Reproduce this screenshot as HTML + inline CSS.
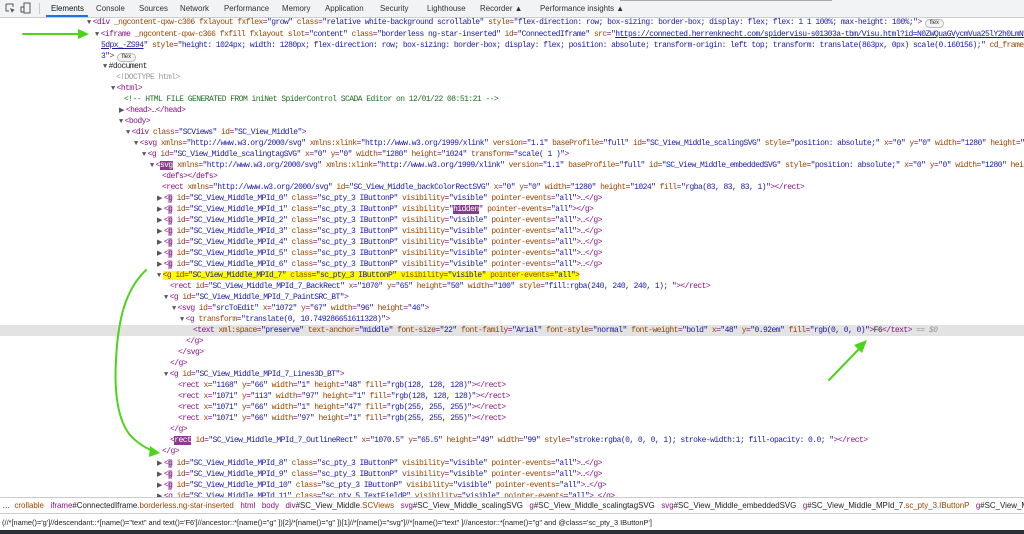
<!DOCTYPE html>
<html><head><meta charset="utf-8">
<style>
html,body{margin:0;padding:0;width:1024px;height:534px;overflow:hidden;background:#fff;position:relative}
.tabs{position:absolute;left:0;top:0;width:1024px;height:17px;background:#f1f3f4;border-bottom:1px solid #cbcdd1;font:7.9px "Liberation Sans",sans-serif;color:#333}
.tab{position:absolute;top:4px}
.l{position:absolute;white-space:nowrap;font-family:"Liberation Mono",monospace;font-size:8px;letter-spacing:-0.55px;line-height:11px;height:11px;color:#881280}
.a{color:#994500}.v{color:#1a1aa6}.c{color:#236e25}.g{color:#999}.k{color:#222}
.u{text-decoration:underline}
.ar{color:#555;font-size:7px;margin-right:2px}
.badge{display:inline-block;font:6px "Liberation Sans",sans-serif;color:#333;border:1px solid #bbb;border-radius:6px;padding:0 4px;line-height:7px;margin-left:3px;background:#f3f3f3;letter-spacing:0}
.hl{background:#ffff00}
.m{background:#8a3a8a;color:#fff}
.mg{background:#c9a6d2}
.sel{position:absolute;left:0;top:325px;width:1024px;height:11px;background:#e3e3e3}
.crumbs{position:absolute;left:0;top:497px;width:1024px;height:15px;background:#fff;border-top:1px solid #ccc;font:7.9px "Liberation Sans",sans-serif;white-space:nowrap;line-height:15px;color:#881280}
.crumbs b{font-weight:normal;color:#222}
.search{position:absolute;left:0;top:513px;width:1024px;height:17px;border-top:1px solid #ccc;font:7.4px "Liberation Sans",sans-serif;white-space:nowrap;line-height:17px;color:#222}
.dark{position:absolute;left:0;top:530px;width:1024px;height:4px;background:#2b2f36}
</style></head><body>
<div class="tabs">
<svg style="position:absolute;left:5px;top:3px" width="11" height="11" viewBox="0 0 11 11"><path d="M1 1h7v3M1 1v7h3" fill="none" stroke="#555" stroke-width="1"/><path d="M5 5l5 2-2 1-1 2z" fill="#555"/></svg>
<svg style="position:absolute;left:20px;top:2px" width="12" height="12" viewBox="0 0 12 12"><rect x="4" y="1" width="6" height="10" fill="none" stroke="#555"/><rect x="1" y="5" width="3" height="5" fill="none" stroke="#555"/></svg>
<div style="position:absolute;left:39px;top:3px;width:1px;height:11px;background:#ccc"></div>
<span class="tab" style="left:51px;color:#111">Elements</span>
<div style="position:absolute;left:46px;top:15px;width:42px;height:2px;background:#1a73e8"></div>
<span class="tab" style="left:96px">Console</span>
<span class="tab" style="left:139px">Sources</span>
<span class="tab" style="left:180px">Network</span>
<span class="tab" style="left:224px">Performance</span>
<span class="tab" style="left:282px">Memory</span>
<span class="tab" style="left:325px">Application</span>
<span class="tab" style="left:380px">Security</span>
<span class="tab" style="left:427px">Lighthouse</span>
<span class="tab" style="left:480px">Recorder &#9650;</span>
<span class="tab" style="left:540px">Performance insights &#9650;</span>
<div style="position:absolute;left:620px;top:0;width:212px;height:1px;background:#aaa"></div>
</div>

<div class="sel"></div>

<div class="l" style="left:87px;top:17px"><span class="ar">▼</span>&lt;div <span class="a">_ngcontent-qxw-c306 fxlayout fxflex</span>=<span class="v">"grow"</span> <span class="a">class</span>=<span class="v">"relative white-background scrollable"</span> <span class="a">style</span>=<span class="v">"flex-direction: row; box-sizing: border-box; display: flex; flex: 1 1 100%; max-height: 100%;"</span>&gt;<span class="badge">flex</span></div>
<div class="l" style="left:95px;top:29px"><span class="ar">▼</span>&lt;iframe <span class="a">_ngcontent-qxw-c366 fxfill fxlayout slot</span>=<span class="v">"content"</span> <span class="a">class</span>=<span class="v">"borderless ng-star-inserted"</span> <span class="a">id</span>=<span class="v">"ConnectedIframe"</span> <span class="a">src</span>=<span class="v">"<span class="u">https://connected.herrenknecht.com/spidervisu-s01303a-tbm/Visu.html?id=N0ZWQuaGVycmVua25lY2h0LmNvbS</span></span></div>
<div class="l" style="left:101px;top:40px"><span class="v u">5dpx_-ZS94</span><span class="v">"</span> <span class="a">style</span>=<span class="v">"height: 1024px; width: 1280px; flex-direction: row; box-sizing: border-box; display: flex; position: absolute; transform-origin: left top; transform: translate(863px, 0px) scale(0.160156);"</span> <span class="a">cd_frame_id_</span>=<span class="v">"</span></div>
<div class="l" style="left:101px;top:51px"><span class="v">3"</span>&gt;<span class="badge">flex</span></div>
<div class="l k" style="left:103px;top:61px"><span class="ar">▼</span>#document</div>
<div class="l g" style="left:116px;top:72px">&lt;!DOCTYPE html&gt;</div>
<div class="l" style="left:111px;top:83px"><span class="ar">▼</span>&lt;html&gt;</div>
<div class="l c" style="left:124px;top:94px">&lt;!-- HTML FILE GENERATED FROM iniNet  SpiderControl SCADA Editor on  12/01/22 08:51:21 --&gt;</div>
<div class="l" style="left:119px;top:105px"><span class="ar">▶</span>&lt;head&gt;<span class="k">…</span>&lt;/head&gt;</div>
<div class="l" style="left:119px;top:116px"><span class="ar">▼</span>&lt;body&gt;</div>
<div class="l" style="left:126px;top:127px"><span class="ar">▼</span>&lt;div <span class="a">class</span>=<span class="v">"SCViews"</span> <span class="a">id</span>=<span class="v">"SC_View_Middle"</span>&gt;</div>
<div class="l" style="left:134px;top:138px"><span class="ar">▼</span>&lt;svg <span class="a">xmlns</span>=<span class="v">"http://www.w3.org/2000/svg"</span> <span class="a">xmlns:xlink</span>=<span class="v">"http://www.w3.org/1999/xlink"</span> <span class="a">version</span>=<span class="v">"1.1"</span> <span class="a">baseProfile</span>=<span class="v">"full"</span> <span class="a">id</span>=<span class="v">"SC_View_Middle_scalingSVG"</span> <span class="a">style</span>=<span class="v">"position: absolute;"</span> <span class="a">x</span>=<span class="v">"0"</span> <span class="a">y</span>=<span class="v">"0"</span> <span class="a">width</span>=<span class="v">"1280"</span> <span class="a">height</span>=<span class="v">"1024"</span></div>
<div class="l" style="left:142px;top:149px"><span class="ar">▼</span>&lt;g <span class="a">id</span>=<span class="v">"SC_View_Middle_scalingtagSVG"</span> <span class="a">x</span>=<span class="v">"0"</span> <span class="a">y</span>=<span class="v">"0"</span> <span class="a">width</span>=<span class="v">"1280"</span> <span class="a">height</span>=<span class="v">"1024"</span> <span class="a">transform</span>=<span class="v">"scale( 1 )"</span>&gt;</div>
<div class="l" style="left:150px;top:160px"><span class="ar">▼</span>&lt;<span class="m">svg</span> <span class="a">xmlns</span>=<span class="v">"http://www.w3.org/2000/svg"</span> <span class="a">xmlns:xlink</span>=<span class="v">"http://www.w3.org/1999/xlink"</span> <span class="a">version</span>=<span class="v">"1.1"</span> <span class="a">baseProfile</span>=<span class="v">"full"</span> <span class="a">id</span>=<span class="v">"SC_View_Middle_embeddedSVG"</span> <span class="a">style</span>=<span class="v">"position: absolute;"</span> <span class="a">x</span>=<span class="v">"0"</span> <span class="a">y</span>=<span class="v">"0"</span> <span class="a">width</span>=<span class="v">"1280"</span> <span class="a">heig</span></div>
<div class="l" style="left:162px;top:171px">&lt;defs&gt;&lt;/defs&gt;</div>
<div class="l" style="left:162px;top:182px">&lt;rect <span class="a">xmlns</span>=<span class="v">"http://www.w3.org/2000/svg"</span> <span class="a">id</span>=<span class="v">"SC_View_Middle_backColorRectSVG"</span> <span class="a">x</span>=<span class="v">"0"</span> <span class="a">y</span>=<span class="v">"0"</span> <span class="a">width</span>=<span class="v">"1280"</span> <span class="a">height</span>=<span class="v">"1024"</span> <span class="a">fill</span>=<span class="v">"rgba(83, 83, 83, 1)"</span>&gt;&lt;/rect&gt;</div>

<div class="l" style="left:157px;top:193px"><span class="ar">▶</span>&lt;<span class="mg">g</span> <span class="a">id</span>=<span class="v">"SC_View_Middle_MPId_0"</span> <span class="a">class</span>=<span class="v">"sc_pty_3 IButtonP"</span> <span class="a">visibility</span>=<span class="v">"visible"</span> <span class="a">pointer-events</span>=<span class="v">"all"</span>&gt;<span class="k">…</span>&lt;/g&gt;</div>
<div class="l" style="left:157px;top:204px"><span class="ar">▶</span>&lt;<span class="mg">g</span> <span class="a">id</span>=<span class="v">"SC_View_Middle_MPId_1"</span> <span class="a">class</span>=<span class="v">"sc_pty_3 IButtonP"</span> <span class="a">visibility</span>=<span class="v">"<span class="m">hidden</span>"</span> <span class="a">pointer-events</span>=<span class="v">"all"</span>&gt;&lt;/g&gt;</div>
<div class="l" style="left:157px;top:215px"><span class="ar">▶</span>&lt;<span class="mg">g</span> <span class="a">id</span>=<span class="v">"SC_View_Middle_MPId_2"</span> <span class="a">class</span>=<span class="v">"sc_pty_3 IButtonP"</span> <span class="a">visibility</span>=<span class="v">"visible"</span> <span class="a">pointer-events</span>=<span class="v">"all"</span>&gt;<span class="k">…</span>&lt;/g&gt;</div>
<div class="l" style="left:157px;top:226px"><span class="ar">▶</span>&lt;<span class="mg">g</span> <span class="a">id</span>=<span class="v">"SC_View_Middle_MPId_3"</span> <span class="a">class</span>=<span class="v">"sc_pty_3 IButtonP"</span> <span class="a">visibility</span>=<span class="v">"visible"</span> <span class="a">pointer-events</span>=<span class="v">"all"</span>&gt;<span class="k">…</span>&lt;/g&gt;</div>
<div class="l" style="left:157px;top:237px"><span class="ar">▶</span>&lt;<span class="mg">g</span> <span class="a">id</span>=<span class="v">"SC_View_Middle_MPId_4"</span> <span class="a">class</span>=<span class="v">"sc_pty_3 IButtonP"</span> <span class="a">visibility</span>=<span class="v">"visible"</span> <span class="a">pointer-events</span>=<span class="v">"all"</span>&gt;<span class="k">…</span>&lt;/g&gt;</div>
<div class="l" style="left:157px;top:248px"><span class="ar">▶</span>&lt;<span class="mg">g</span> <span class="a">id</span>=<span class="v">"SC_View_Middle_MPId_5"</span> <span class="a">class</span>=<span class="v">"sc_pty_3 IButtonP"</span> <span class="a">visibility</span>=<span class="v">"visible"</span> <span class="a">pointer-events</span>=<span class="v">"all"</span>&gt;<span class="k">…</span>&lt;/g&gt;</div>
<div class="l" style="left:157px;top:259px"><span class="ar">▶</span>&lt;<span class="mg">g</span> <span class="a">id</span>=<span class="v">"SC_View_Middle_MPId_6"</span> <span class="a">class</span>=<span class="v">"sc_pty_3 IButtonP"</span> <span class="a">visibility</span>=<span class="v">"visible"</span> <span class="a">pointer-events</span>=<span class="v">"all"</span>&gt;<span class="k">…</span>&lt;/g&gt;</div>
<div class="l" style="left:157px;top:270px"><span class="ar">▼</span><span class="hl">&lt;g <span class="a">id</span>=<span class="v">"SC_View_Middle_MPId_7"</span> <span class="a">class</span>=<span class="v">"sc_pty_3 IButtonP"</span> <span class="a">visibility</span>=<span class="v">"visible"</span> <span class="a">pointer-events</span>=<span class="v">"all"</span>&gt;</span></div>
<div class="l" style="left:170px;top:281px">&lt;rect <span class="a">id</span>=<span class="v">"SC_View_Middle_MPId_7_BackRect"</span> <span class="a">x</span>=<span class="v">"1070"</span> <span class="a">y</span>=<span class="v">"65"</span> <span class="a">height</span>=<span class="v">"50"</span> <span class="a">width</span>=<span class="v">"100"</span> <span class="a">style</span>=<span class="v">"fill:rgba(240, 240, 240, 1); "</span>&gt;&lt;/rect&gt;</div>
<div class="l" style="left:164px;top:292px"><span class="ar">▼</span>&lt;g <span class="a">id</span>=<span class="v">"SC_View_Middle_MPId_7_PaintSRC_BT"</span>&gt;</div>
<div class="l" style="left:172px;top:303px"><span class="ar">▼</span>&lt;svg <span class="a">id</span>=<span class="v">"srcToEdit"</span> <span class="a">x</span>=<span class="v">"1072"</span> <span class="a">y</span>=<span class="v">"67"</span> <span class="a">width</span>=<span class="v">"96"</span> <span class="a">height</span>=<span class="v">"46"</span>&gt;</div>
<div class="l" style="left:180px;top:314px"><span class="ar">▼</span>&lt;g <span class="a">transform</span>=<span class="v">"translate(0, 10.749286651611328)"</span>&gt;</div>
<div class="l" style="left:193px;top:325px">&lt;text <span class="a">xml:space</span>=<span class="v">"preserve"</span> <span class="a">text-anchor</span>=<span class="v">"middle"</span> <span class="a">font-size</span>=<span class="v">"22"</span> <span class="a">font-family</span>=<span class="v">"Arial"</span> <span class="a">font-style</span>=<span class="v">"normal"</span> <span class="a">font-weight</span>=<span class="v">"bold"</span> <span class="a">x</span>=<span class="v">"48"</span> <span class="a">y</span>=<span class="v">"0.92em"</span> <span class="a">fill</span>=<span class="v">"rgb(0, 0, 0)"</span>&gt;<span class="k">F6</span>&lt;/text&gt; <span class="g">== <i>$0</i></span></div>
<div class="l" style="left:186px;top:336px">&lt;/g&gt;</div>
<div class="l" style="left:178px;top:347px">&lt;/svg&gt;</div>
<div class="l" style="left:170px;top:358px">&lt;/g&gt;</div>
<div class="l" style="left:164px;top:369px"><span class="ar">▼</span>&lt;g <span class="a">id</span>=<span class="v">"SC_View_Middle_MPId_7_Lines3D_BT"</span>&gt;</div>
<div class="l" style="left:178px;top:380px">&lt;rect <span class="a">x</span>=<span class="v">"1168"</span> <span class="a">y</span>=<span class="v">"66"</span> <span class="a">width</span>=<span class="v">"1"</span> <span class="a">height</span>=<span class="v">"48"</span> <span class="a">fill</span>=<span class="v">"rgb(128, 128, 128)"</span>&gt;&lt;/rect&gt;</div>
<div class="l" style="left:178px;top:391px">&lt;rect <span class="a">x</span>=<span class="v">"1071"</span> <span class="a">y</span>=<span class="v">"113"</span> <span class="a">width</span>=<span class="v">"97"</span> <span class="a">height</span>=<span class="v">"1"</span> <span class="a">fill</span>=<span class="v">"rgb(128, 128, 128)"</span>&gt;&lt;/rect&gt;</div>
<div class="l" style="left:178px;top:402px">&lt;rect <span class="a">x</span>=<span class="v">"1071"</span> <span class="a">y</span>=<span class="v">"66"</span> <span class="a">width</span>=<span class="v">"1"</span> <span class="a">height</span>=<span class="v">"47"</span> <span class="a">fill</span>=<span class="v">"rgb(255, 255, 255)"</span>&gt;&lt;/rect&gt;</div>
<div class="l" style="left:178px;top:413px">&lt;rect <span class="a">x</span>=<span class="v">"1071"</span> <span class="a">y</span>=<span class="v">"66"</span> <span class="a">width</span>=<span class="v">"97"</span> <span class="a">height</span>=<span class="v">"1"</span> <span class="a">fill</span>=<span class="v">"rgb(255, 255, 255)"</span>&gt;&lt;/rect&gt;</div>
<div class="l" style="left:170px;top:424px">&lt;/g&gt;</div>
<div class="l" style="left:170px;top:435px">&lt;<span class="m">rect</span> <span class="a">id</span>=<span class="v">"SC_View_Middle_MPId_7_OutlineRect"</span> <span class="a">x</span>=<span class="v">"1070.5"</span> <span class="a">y</span>=<span class="v">"65.5"</span> <span class="a">height</span>=<span class="v">"49"</span> <span class="a">width</span>=<span class="v">"99"</span> <span class="a">style</span>=<span class="v">"stroke:rgba(0, 0, 0, 1); stroke-width:1;  fill-opacity: 0.0; "</span>&gt;&lt;/rect&gt;</div>
<div class="l" style="left:162px;top:446px">&lt;/g&gt;</div>
<div class="l" style="left:157px;top:458px"><span class="ar">▶</span>&lt;<span class="mg">g</span> <span class="a">id</span>=<span class="v">"SC_View_Middle_MPId_8"</span> <span class="a">class</span>=<span class="v">"sc_pty_3 IButtonP"</span> <span class="a">visibility</span>=<span class="v">"visible"</span> <span class="a">pointer-events</span>=<span class="v">"all"</span>&gt;<span class="k">…</span>&lt;/g&gt;</div>
<div class="l" style="left:157px;top:469px"><span class="ar">▶</span>&lt;<span class="mg">g</span> <span class="a">id</span>=<span class="v">"SC_View_Middle_MPId_9"</span> <span class="a">class</span>=<span class="v">"sc_pty_3 IButtonP"</span> <span class="a">visibility</span>=<span class="v">"visible"</span> <span class="a">pointer-events</span>=<span class="v">"all"</span>&gt;<span class="k">…</span>&lt;/g&gt;</div>
<div class="l" style="left:157px;top:480px"><span class="ar">▶</span>&lt;<span class="mg">g</span> <span class="a">id</span>=<span class="v">"SC_View_Middle_MPId_10"</span> <span class="a">class</span>=<span class="v">"sc_pty_3 IButtonP"</span> <span class="a">visibility</span>=<span class="v">"visible"</span> <span class="a">pointer-events</span>=<span class="v">"all"</span>&gt;<span class="k">…</span>&lt;/g&gt;</div>
<div class="l" style="left:157px;top:491px"><span class="ar">▶</span>&lt;g <span class="a">id</span>=<span class="v">"SC_View_Middle_MPId_11"</span> <span class="a">class</span>=<span class="v">"sc_pty_5 TextFieldP"</span> <span class="a">visibility</span>=<span class="v">"visible"</span> <span class="a">pointer-events</span>=<span class="v">"all"</span>&gt;<span class="k">…</span>&lt;/g&gt;</div>

<svg style="position:absolute;left:0;top:0" width="1024" height="534">
<g stroke="#4cd31a" stroke-width="2" fill="none" stroke-linecap="round">
<path d="M23 34 L80 34"/>
<path d="M146 270 C125 290 118 320 116 360 C114 395 118 420 130 435 C140 446 150 450 156 452"/>
<path d="M829 380 L860 348"/>
</g>
<g fill="#4cd31a">
<path d="M78 29 L89 34 L78 39 Z"/>
<path d="M150 446 L160 453 L149 457 Z"/>
<path d="M854 345 L867 340 L862 353 Z"/>
</g>
</svg>

<div class="crumbs">&nbsp;<b>…</b>&nbsp; <span style="color:#994500">crollable</span> &nbsp; <span>iframe</span><b>#ConnectedIframe</b><span style="color:#994500">.borderless.ng-star-inserted</span> &nbsp; html &nbsp; body &nbsp; div<b>#SC_View_Middle</b><span style="color:#994500">.SCViews</span> &nbsp; svg<b>#SC_View_Middle_scalingSVG</b> &nbsp; g<b>#SC_View_Middle_scalingtagSVG</b> &nbsp; svg<b>#SC_View_Middle_embeddedSVG</b> &nbsp; g<b>#SC_View_Middle_MPId_7</b><span style="color:#994500">.sc_pty_3.IButtonP</span> &nbsp; g<b>#SC_View_Middle_MPI</b></div>
<div class="search">&nbsp;(//*[name()='g']//descendant::*[name()="text" and text()='F6']//ancestor::*[name()="g" ])[2]/*[name()="g" ])[1]//*[name()="svg"]//*[name()="text" ]//ancestor::*[name()="g" and @class='sc_pty_3 IButtonP']</div>
<div class="dark"></div>
</body></html>
